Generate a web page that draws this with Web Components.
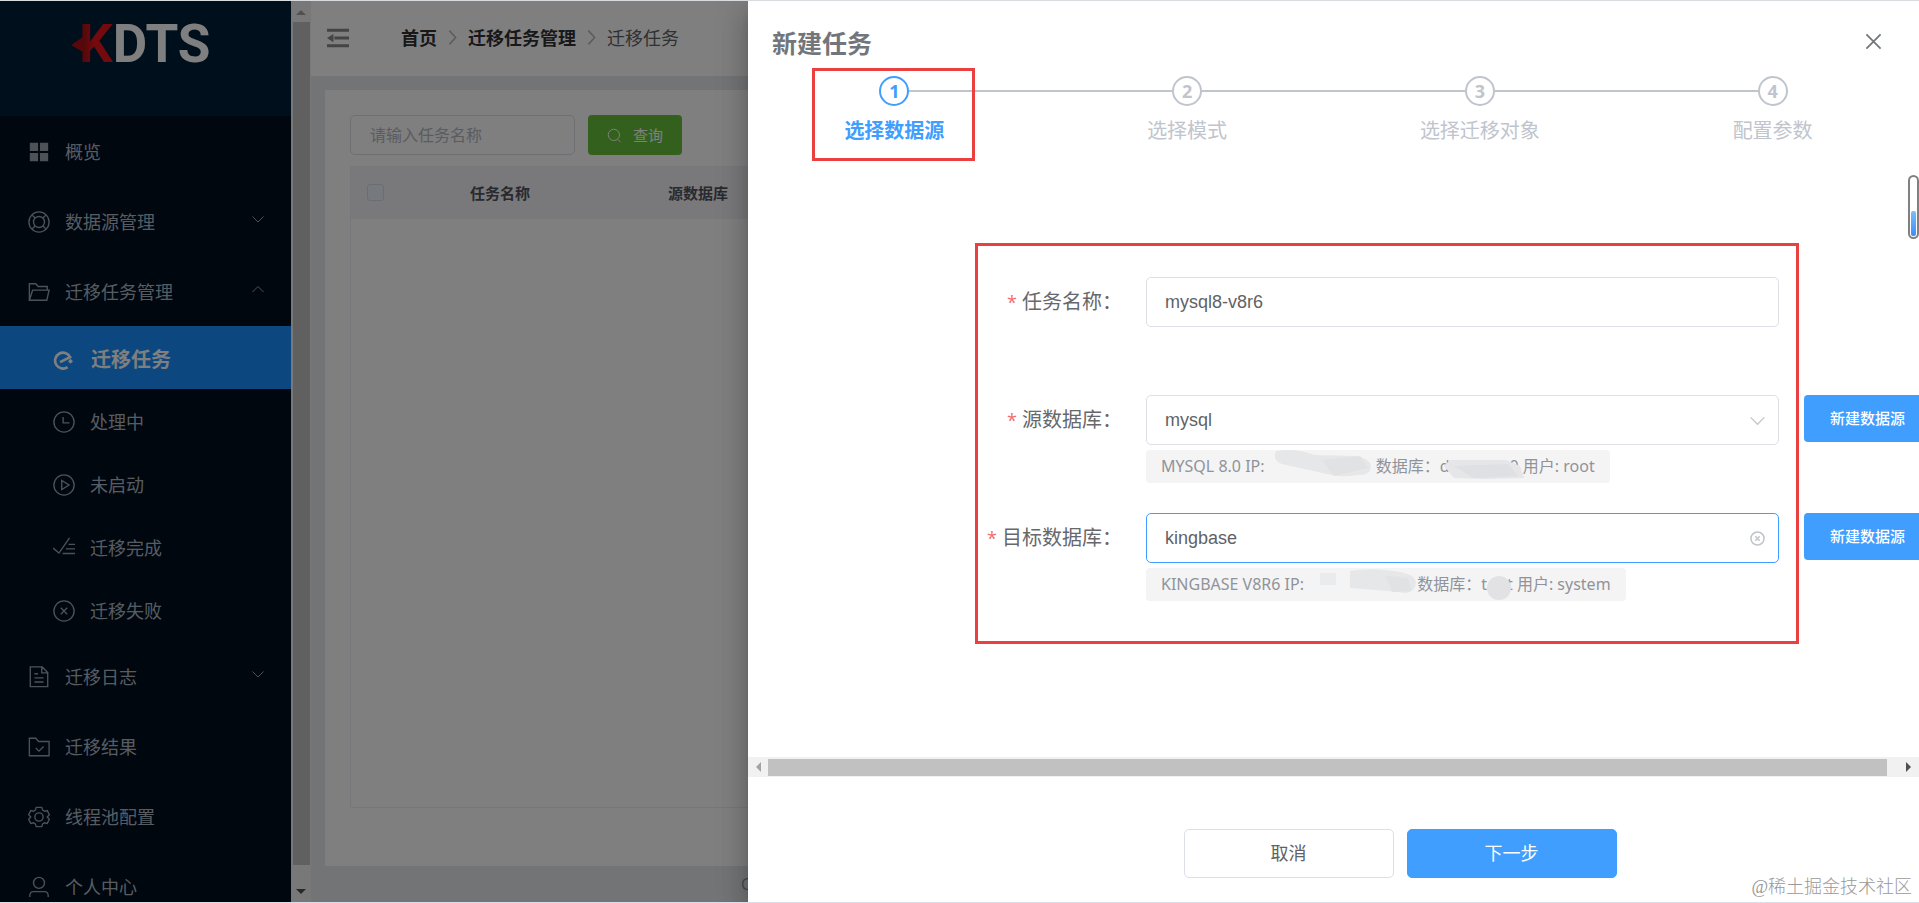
<!DOCTYPE html>
<html lang="zh-CN">
<head>
<meta charset="utf-8">
<title>KDTS</title>
<style>
	html, body {
		height: 100%;
		margin: 0;
	}

	body {
		box-sizing: border-box;
		border-top: 1px solid #d8dcde;
		border-bottom: 1px solid #d8dfe8;
		font-family: "Open Sans", "Noto Sans CJK SC", sans-serif;
		overflow: hidden;
		position: relative;
	}
</style>
</head>
<body>
<kd-app></kd-app>
<task-drawer></task-drawer>

<script>
const svg = (body, box = 24) =>
	`<svg viewBox="0 0 ${box} ${box}" fill="none" stroke="currentColor" stroke-width="1.5" aria-hidden="true">${body}</svg>`;

const icons = {
	grid: svg('<path fill="currentColor" stroke="none" d="M2 2h9v9H2zM13 2h9v9h-9zM2 13h9v9H2zM13 13h9v9h-9z"/>'),
	ring: svg('<circle cx="12" cy="12" r="11"/><circle cx="12" cy="12" r="6"/><path d="M8 8L4.500 4.500M16 8l3.500-3.500M8 16l-3.500 3.500M16 16l3.500 3.500"/>'),
	folder: svg('<path d="M1.500 21V3h7l2.500 3h10v4M1.500 21L5 10h18l-2.500 11z"/>'),
	doc: svg('<path d="M2.500 1h13l6 6v15.500h-19zM15 1v6.500h6.500M7 8.500h4M7 13h10M7 17.500h10"/>'),
	result: svg('<path d="M1.500 21.500v-19h7l3 3.500h11.500v15.500zM8.500 13l3.500 3.500 5-5"/>'),
	gear: svg('<path d="M9 1.500h6l1 3 2 1.200 3-.7 2.300 4.500L21 12l2.300 2.500L21 19l-3-.7-2 1.200-1 3H9l-1-3-2-1.200-3 .7L.700 14.500 3 12 .700 9.500 3 5l3 .7 2-1.200z"/><circle cx="12" cy="12" r="4.500"/>'),
	user: svg('<circle cx="12" cy="7.500" r="6"/><path d="M2 23v-2c0-2 1.500-4 4-4h12c2.500 0 4 2 4 4v2"/>'),
	dash: svg('<path stroke-width="3.200" d="M8.500 14.500L20.500 8.500A9.500 9.500 0 1 0 17.500 20.500"/><path fill="currentColor" stroke="none" d="M18 13.500l3-3 3 3-3 3z"/>'),
	clock: svg('<circle cx="12" cy="12" r="11"/><path d="M11 6.500v6.500h7"/>'),
	play: svg('<circle cx="12" cy="12" r="11"/><path d="M9.500 7v10l8-5z"/>'),
	done: svg('<path d="M0 12l6.500 5.500L18 1M17 8h7M14 13h10M10.500 18H24"/>'),
	fail: svg('<circle cx="12" cy="12" r="11"/><path d="M8.500 8.500l7 7M15.500 8.500l-7 7"/>'),
	clear: svg('<circle cx="12" cy="12" r="10.500" stroke-width="2.500"/><path stroke-width="2.500" d="M8.500 8.500l7 7M15.500 8.500l-7 7"/>'),
	down: svg('<path stroke-width="2" d="M1 7l11 11L23 7"/>'),
	up: svg('<path stroke-width="2" d="M1 18L12 7l11 11"/>'),
	right: svg('<path stroke-width="2.500" d="M7 1l10 11L7 23"/>'),
	close: svg('<path stroke-width="2.500" d="M2 2l20 20M22 2L2 22"/>'),
	fold: svg('<path stroke-width="3.200" d="M0 3.500h24M8 12h16M0 20.500h24"/><path fill="currentColor" stroke="none" d="M0 12l7-4.500v9z"/>'),
	search: svg('<circle cx="11" cy="11" r="9"/><path d="M17 18l5 5"/>')
};

// every element gets an open root filled from its static html
class KdElement extends HTMLElement {
	constructor() {
		super();
		this.attachShadow( { mode: 'open' } );
	}

	connectedCallback() {
		this.shadowRoot.innerHTML = this.render();
	}
}

class KdIcon extends KdElement {
	render() {
		return `
		<style>
			:host { display: inline-flex; flex: none; width: 22px; height: 22px; }
			svg { width: 100%; height: 100%; }
		</style>
		${icons[this.getAttribute('name')]}`;
	}
}
customElements.define('kd-icon', KdIcon);

class KdScrollbar extends KdElement {
	render() {
		return `
		<style>
			:host { display: flex; background: #f1f1f1; flex: none; }
			:host([vertical]) { flex-direction: column; width: 20px; }
			:host(:not([vertical])) { height: 20px; }
			.arrow { flex: none; width: 20px; height: 20px; fill: #a3a3a3; }
			.end { fill: #505050; }
			.thumb { flex: 1; background: #c1c1c1; margin: 2px 0 1px; }
			:host([vertical]) .thumb { margin: 1px 1px 17px 2px; }
			:host(:not([vertical])) .thumb { margin-right: 12px; }
		</style>
		${this.hasAttribute('vertical') ? `
		<svg class="arrow" viewBox="0 0 20 20"><path d="M5 14h10l-5-5z"/></svg>
		<div class="thumb"></div>
		<svg class="arrow end" viewBox="0 0 20 20"><path d="M5 7h10l-5 5z"/></svg>` : `
		<svg class="arrow" viewBox="0 0 20 20"><path d="M13 5v10l-5-5z"/></svg>
		<div class="thumb"></div>
		<svg class="arrow end" viewBox="0 0 20 20"><path d="M7 5v10l5-5z"/></svg>`}`;
	}
}
customElements.define('kd-scrollbar', KdScrollbar);

class MenuItem extends KdElement {
	render() {
		const arrow = this.getAttribute('arrow');
		return `
		<style>
			:host { display: block; color: #aeb9c6; font-size: 18px; }
			a {
				align-items: center;
				box-sizing: border-box;
				color: inherit;
				display: flex;
				gap: 15px;
				height: 70px;
				padding: 2px 27px 0 28px;
				text-decoration: none;
			}
			span { flex: 1; line-height: 24px; }
			.icon { color: #9aa5b0; }
			.arrow { width: 12px; height: 12px; margin-bottom: 6px; color: #9aa5b0; }
			:host([sub]) a { height: 63px; padding: 2px 27px 0 53px; }
			:host([active]) a { background: #1890ff; color: #fff; font-size: 20px; font-weight: bold; gap: 18px; padding-top: 4px; }
			:host([active]) .icon { width: 20px; height: 20px; color: #fff; }
		</style>
		<a href="#">
			<kd-icon class="icon" name="${this.getAttribute('icon')}"></kd-icon>
			<span><slot></slot></span>
			${arrow ? `<kd-icon class="arrow" name="${arrow}"></kd-icon>` : ''}
		</a>`;
	}
}
customElements.define('menu-item', MenuItem);

class SideBar extends KdElement {
	render() {
		return `
		<style>
			:host { display: flex; flex-direction: column; flex: none; width: 291px; background: #000e1e; overflow: hidden; }
			.logo {
				background: #001f38;
				box-sizing: border-box;
				color: #fff;
				display: flex;
				flex: none;
				font: bold 53px/60px Roboto, sans-serif;
				height: 115px;
				padding: 13px 0 0 71px;
			}
			.logo svg { width: 12px; height: 60px; fill: #b01018; margin-right: -4px; }
			.k { background: linear-gradient(90deg, #8c1010, #e8141c 45%); background-clip: text; color: transparent; }
		</style>
		<div class="logo">
			<svg viewBox="0 0 12 60"><path d="M0 31l12-8v15z"/></svg>
			<span class="k">K</span><span>DTS</span>
		</div>
		<nav>
			<menu-item icon="grid">概览</menu-item>
			<menu-item icon="ring" arrow="down">数据源管理</menu-item>
			<menu-item icon="folder" arrow="up">迁移任务管理</menu-item>
			<menu-item icon="dash" sub active>迁移任务</menu-item>
			<menu-item icon="clock" sub>处理中</menu-item>
			<menu-item icon="play" sub>未启动</menu-item>
			<menu-item icon="done" sub>迁移完成</menu-item>
			<menu-item icon="fail" sub>迁移失败</menu-item>
			<menu-item icon="doc" arrow="down">迁移日志</menu-item>
			<menu-item icon="result">迁移结果</menu-item>
			<menu-item icon="gear">线程池配置</menu-item>
			<menu-item icon="user">个人中心</menu-item>
		</nav>`;
	}
}
customElements.define('side-bar', SideBar);

class PageHeader extends KdElement {
	render() {
		return `
		<style>
			:host {
				align-items: center;
				background: #fff;
				box-sizing: border-box;
				display: flex;
				flex: none;
				font-size: 18px;
				gap: 52px;
				height: 75px;
				line-height: 24px;
				padding: 0 16px 2px;
			}
			button { background: none; border: 0; color: #888; display: flex; padding: 0; }
			nav { align-items: center; display: flex; gap: 8px; color: #606266; }
			a { color: #303133; font-weight: bold; text-decoration: none; }
			nav kd-icon { width: 15px; height: 15px; color: #b4b8c0; }
		</style>
		<button type="button" aria-label="折叠菜单"><kd-icon name="fold"></kd-icon></button>
		<nav>
			<a href="#">首页</a><kd-icon name="right"></kd-icon>
			<a href="#">迁移任务管理</a><kd-icon name="right"></kd-icon>
			<span>迁移任务</span>
		</nav>`;
	}
}
customElements.define('page-header', PageHeader);

class TaskList extends KdElement {
	render() {
		return `
		<style>
			:host { background: #fff; box-sizing: border-box; display: flex; flex-direction: column; padding: 25px 25px 58px; }
			form { display: flex; gap: 13px; margin-bottom: 11px; }
			form input {
				border: 1px solid #dcdfe6;
				border-radius: 5px;
				box-sizing: border-box;
				font: 16px/24px "Open Sans", "Noto Sans CJK SC", sans-serif;
				height: 40px;
				padding: 0 19px;
				width: 225px;
			}
			form input::placeholder { color: #b4b8c0; }
			button {
				align-items: center;
				background: #67c23a;
				border: 0;
				border-radius: 4px;
				color: #fff;
				display: flex;
				font: 15px/20px "Open Sans", "Noto Sans CJK SC", sans-serif;
				gap: 11px;
				height: 40px;
				padding: 0 19px;
			}
			button kd-icon { width: 15px; height: 15px; }
			.table { border: 1px solid #ebeef5; border-top: 0; flex: 1; }
			table { border-collapse: collapse; table-layout: fixed; width: 100%; }
			th { background: #f2f3f7; color: #515560; font-size: 15px; height: 53px; line-height: 20px; padding: 0; }
			.check { width: 50px; }
			.name { width: 198px; }
			.check input {
				appearance: none;
				background: #edf2fc;
				border: 1px solid #d4dce6;
				border-radius: 3px;
				display: block;
				height: 17px;
				margin: 0 0 0 16px;
				width: 17px;
			}
		</style>
		<form>
			<input type="text" placeholder="请输入任务名称" aria-label="任务名称">
			<button type="button"><kd-icon name="search"></kd-icon>查询</button>
		</form>
		<div class="table">
			<table>
				<thead>
					<tr>
						<th class="check"><input type="checkbox" aria-label="全选" disabled></th>
						<th class="name">任务名称</th>
						<th class="name">源数据库</th>
						<th></th>
					</tr>
				</thead>
			</table>
		</div>`;
	}
}
customElements.define('task-list', TaskList);

class KdApp extends KdElement {
	render() {
		return `
		<style>
			:host { display: flex; height: 100%; }
			main { background: #e4e9ec; display: flex; flex: 1; flex-direction: column; min-width: 0; }
			task-list { flex: 1; margin: 14px 14px 0; }
			footer { color: #909399; flex: none; font-size: 16px; line-height: 36px; padding-left: 430px; }
		</style>
		<side-bar></side-bar>
		<kd-scrollbar vertical></kd-scrollbar>
		<main>
			<page-header></page-header>
			<task-list></task-list>
			<footer>C</footer>
		</main>`;
	}
}
customElements.define('kd-app', KdApp);

class StepItem extends KdElement {
	render() {
		return `
		<style>
			:host { color: #c0c4cc; display: block; flex: 1; position: relative; text-align: center; }
			.head { align-items: center; display: flex; }
			.line { background: #c0c4cc; flex: 1; height: 2px; }
			:host(:first-child) .line:first-child, :host(:last-child) .line:last-child { background: none; }
			.num {
				border: 2px solid;
				border-radius: 50%;
				box-sizing: border-box;
				font-size: 18px;
				font-weight: bold;
				height: 30px;
				line-height: 26px;
				width: 30px;
			}
			.label { font-size: 20px; line-height: 50px; }
			:host([active]) { color: #409eff; }
			:host([active]) .label { font-weight: bold; }
			:host([active])::after {
				border: 3px solid #ea4040;
				box-sizing: border-box;
				content: "";
				height: 93px;
				left: 64px;
				position: absolute;
				right: 66px;
				top: -8px;
			}
		</style>
		<div class="head">
			<div class="line"></div>
			<div class="num">${this.getAttribute('num')}</div>
			<div class="line"></div>
		</div>
		<div class="label"><slot></slot></div>`;
	}
}
customElements.define('step-item', StepItem);

// label + text box or drop-down, an optional info tag (slot) and a button after it
class FormRow extends KdElement {
	control() {
		const value = this.getAttribute('value');
		if (!this.hasAttribute('select')) return `<input id="field" type="text" value="${value}">`;
		return `
			<select id="field"><option>${value}</option></select>
			<kd-icon name="${this.hasAttribute('focused') ? 'clear' : 'down'}"></kd-icon>`;
	}

	render() {
		const select = this.hasAttribute('select');
		return `
		<style>
			:host { display: grid; grid-template-columns: 398px minmax(0, 1fr) 115px; min-height: 88px; }
			label { color: #66686c; font-size: 20px; line-height: 50px; padding-right: 24px; text-align: right; }
			label::before { color: #f56c6c; content: "*"; font-size: 18px; margin-right: 5px; }
			.control { margin-right: 25px; }
			.box { display: grid; margin-bottom: 5px; }
			.box > * { grid-area: 1 / 1; }
			input, select {
				appearance: none;
				background: #fff;
				border: 1px solid #dcdfe6;
				border-radius: 5px;
				box-sizing: border-box;
				color: #606266;
				font: 18px/24px "Liberation Sans", Arial, sans-serif;
				height: 50px;
				padding: 0 18px;
				width: 100%;
			}
			:host([focused]) select { border-color: #409eff; }
			.box kd-icon { align-self: center; color: #c0c4cc; height: 15px; justify-self: end; margin-right: 14px; width: 15px; }
			button {
				background: #409eff;
				border: 0;
				border-radius: 4px;
				color: #fff;
				font: 500 15px/20px "Open Sans", "Noto Sans CJK SC", sans-serif;
				height: 47px;
				padding: 0 0 2px;
				width: 127px;
			}
		</style>
		<label for="field">${this.getAttribute('label')}：</label>
		<div class="control">
			<div class="box">${this.control()}</div>
			<slot></slot>
		</div>
		${select ? '<button type="button">新建数据源</button>' : ''}`;
	}
}
customElements.define('form-row', FormRow);

class InfoTag extends KdElement {
	render() {
		return `
		<style>
			:host {
				background: #f4f4f5;
				border-radius: 4px;
				color: #909399;
				display: inline-flex;
				font-family: "Noto Sans", "Noto Sans CJK SC", sans-serif;
				font-size: 16px;
				height: 33px;
				line-height: 33px;
				padding: 0 15px;
				vertical-align: top;
				white-space: pre;
			}
		</style>
		<slot></slot>`;
	}
}
customElements.define('info-tag', InfoTag);

// brushed-over part of a tag; the shape bleeds over the letters beside it
class SmudgeMark extends KdElement {
	static shapes = {
		long: '<path fill="#e6e7e9" d="M7 1Q27-2 45 5l42 1q15 3 15 11-1 9-14 8-16 3-30-1L13 14Q3 10 7 1z"/><path fill="#e1e2e4" d="M53 10l38-4 8 12-34 8z"/>',
		block: '<path fill="#eaebed" d="M12 5h16v12H12z"/><path fill="#e6e7e9" d="M42 3q20-4 50 1 14 2 16 10 0 9-10 11l-18-2-38-3z"/><path fill="#e1e2e4" d="M78 8l22 2 4 13-20 1z"/>',
		low: '<path fill="#e6e6e8" d="M0 10l26 0 30 0 14 6 4 12-40 1-30-1-10-12z"/><path fill="#dfe0e3" d="M4 16l54-2 10 12-44 2z"/>',
		dot: '<circle fill="#e2e2e5" cx="12" cy="20" r="12"/>'
	};

	render() {
		return `
		<style>
			:host { display: block; height: 33px; position: relative; white-space: normal; }
			svg { display: block; height: 33px; overflow: visible; width: 100%; }
		</style>
		<svg>${SmudgeMark.shapes[this.getAttribute('shape')]}</svg>`;
	}
}
customElements.define('smudge-mark', SmudgeMark);

class TaskDrawer extends KdElement {
	render() {
		return `
		<style>
			:host { background: rgba(0, 0, 0, .5); inset: 0; padding-left: 748px; position: absolute; display: flex; }
			.drawer {
				background: #fff;
				box-shadow: 0 8px 10px -5px rgba(0, 0, 0, .2), 0 16px 24px 2px rgba(0, 0, 0, .14), 0 6px 30px 5px rgba(0, 0, 0, .12);
				display: flex;
				flex: 1;
				flex-direction: column;
				min-width: 0;
				position: relative;
			}
			header {
				align-items: center;
				box-sizing: border-box;
				display: flex;
				flex: none;
				height: 75px;
				justify-content: space-between;
				padding: 8px 37px 0 24px;
			}
			h1 { color: #72767b; font-size: 25px; line-height: 32px; margin: 0; }
			.close { background: none; border: 0; color: #72767b; display: flex; padding: 0 0 3px; }
			.close kd-icon { height: 17px; width: 17px; }
			.steps { display: flex; flex: none; }
			.body { flex: 1; overflow: hidden; position: relative; }
			form { display: grid; gap: 30px; padding-top: 121px; }
			.frame {
				border: 3px solid #ea4040;
				box-sizing: border-box;
				height: 401px;
				left: 227px;
				pointer-events: none;
				position: absolute;
				right: 120px;
				top: 87px;
			}
			.gauge {
				border: 2px solid #808080;
				border-radius: 6px;
				box-sizing: border-box;
				display: flex;
				height: 64px;
				padding: 34px 1px 1px;
				position: absolute;
				right: 0;
				top: 19px;
				width: 11px;
			}
			.gauge i { background: linear-gradient(#7cc0f5, #3d8bff); border-radius: 2px; flex: 1; }
			footer { box-sizing: border-box; display: flex; flex: none; gap: 13px; height: 125px; justify-content: center; padding: 52px 0 0 133px; }
			footer button {
				background: #fff;
				border: 1px solid #dcdfe6;
				border-radius: 5px;
				color: #606266;
				font: 18px/24px "Open Sans", "Noto Sans CJK SC", sans-serif;
				height: 49px;
				padding: 0 0 2px;
				width: 210px;
			}
			footer .next { background: #409eff; border-color: #409eff; color: #fff; }
			.mark { bottom: 3px; color: #999; font: 18px/24px "Liberation Serif", "Noto Sans CJK SC", serif; font-weight: 300; position: absolute; right: 7px; }
		</style>
		<section class="drawer" role="dialog" aria-labelledby="title">
			<header>
				<h1 id="title">新建任务</h1>
				<button class="close" type="button" aria-label="关闭"><kd-icon name="close"></kd-icon></button>
			</header>
			<div class="steps">
				<step-item num="1" active>选择数据源</step-item>
				<step-item num="2">选择模式</step-item>
				<step-item num="3">选择迁移对象</step-item>
				<step-item num="4">配置参数</step-item>
			</div>
			<div class="body">
				<form>
					<form-row label="任务名称" value="mysql8-v8r6"></form-row>
					<form-row label="源数据库" value="mysql" select>
						<info-tag>MYSQL 8.0 IP: <smudge-mark shape="long" style="width: 107px"></smudge-mark>数据库：d<smudge-mark shape="low" style="width: 60px"></smudge-mark>0 用户: root</info-tag>
					</form-row>
					<form-row label="目标数据库" value="kingbase" select focused>
						<info-tag>KINGBASE V8R6 IP: <smudge-mark shape="block" style="width: 109px"></smudge-mark>数据库：t<smudge-mark shape="dot" style="width: 20px"></smudge-mark>t 用户: system</info-tag>
					</form-row>
				</form>
				<div class="frame"></div>
				<div class="gauge"><i></i></div>
			</div>
			<kd-scrollbar></kd-scrollbar>
			<footer>
				<button type="button">取消</button>
				<button class="next" type="button">下一步</button>
			</footer>
			<div class="mark">@稀土掘金技术社区</div>
		</section>`;
	}
}
customElements.define('task-drawer', TaskDrawer);
</script>
</body>
</html>
